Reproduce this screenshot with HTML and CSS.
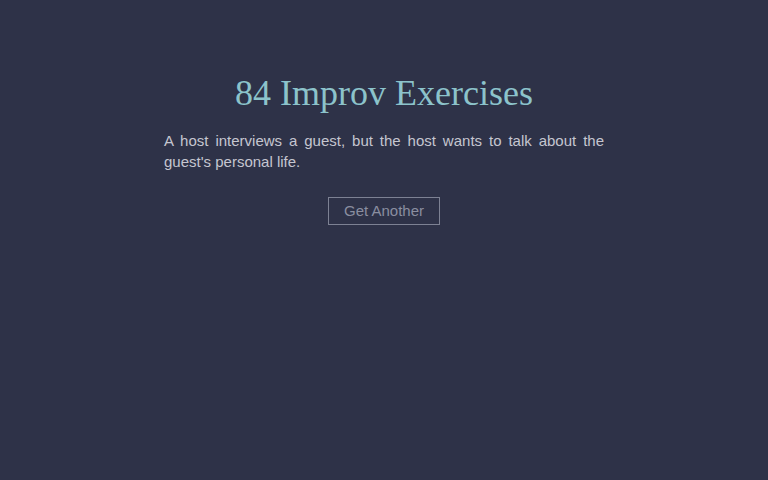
FILE: index.html
```html
<!DOCTYPE html>
<html lang="en">
<head>
<meta charset="utf-8">
<title>84 Improv Exercises</title>
<link rel="stylesheet" href="styles.css">
</head>
<body>
  <main class="page">
    <h1 class="title">84 Improv Exercises</h1>
    <p class="exercise">A host interviews a guest, but the host wants to talk about the guest's personal life.</p>
    <button class="another" type="button">Get Another</button>
  </main>
</body>
</html>
```
FILE: styles.css
```css
html, body {
  margin: 0;
  height: 100%;
  background: #2e3248;
}

.page {
  width: 440px;
  margin: 0 auto;
  padding-top: 72px;
  display: flex;
  flex-direction: column;
  align-items: center;
}

.title {
  margin: 0;
  font-family: "Liberation Serif", "Times New Roman", serif;
  font-weight: normal;
  font-size: 36px;
  line-height: 42px;
  color: #8cc3cb;
}

.exercise {
  margin: 16px 0 0;
  width: 100%;
  font-family: "Liberation Sans", Arial, sans-serif;
  font-size: 15px;
  line-height: 21px;
  color: #c5c6d0;
  text-align: justify;
}

.another {
  margin-top: 25px;
  padding: 4px 15px;
  background: transparent;
  border: 1px solid #7d8193;
  border-radius: 0;
  font-family: "Liberation Sans", Arial, sans-serif;
  font-size: 15px;
  line-height: 18px;
  color: #8a8ea0;
  cursor: pointer;
}
```
